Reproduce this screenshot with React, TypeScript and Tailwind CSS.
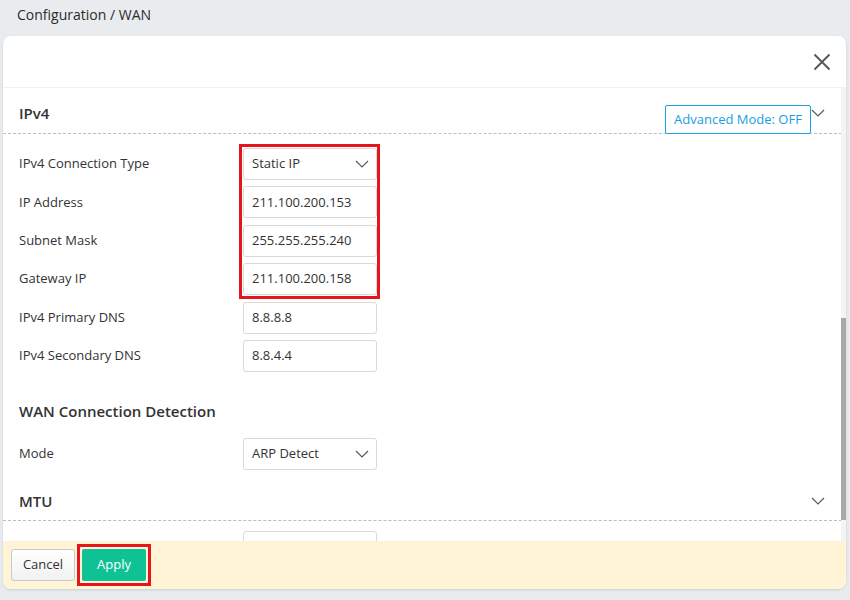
import React from "react";

const font = { fontFamily: '"Open Sans", "Noto Sans", sans-serif' };

const Chevron = ({ className = "" }: { className?: string }) => (
  <svg width="14" height="8" viewBox="0 0 14 8" className={className}>
    <polyline points="1,1 7,7 13,1" fill="none" stroke="#5a5a5a" strokeWidth="1.2" />
  </svg>
);

const Field = ({ value, select }: { value: string; select?: boolean }) => (
  <div className="w-[134px] h-[32px] border border-[#d9d9d9] rounded-[3px] bg-white flex items-center justify-between pl-[8px] pr-[7px] text-[13px] text-[#333]">
    <span>{value}</span>
    {select && <Chevron />}
  </div>
);

const Row = ({ label, value, select }: { label: string; value: string; select?: boolean }) => (
  <div className="flex items-center">
    <div className="w-[224px] text-[13px] text-[#333]">{label}</div>
    <Field value={value} select={select} />
  </div>
);

const App = () => {
  return (
    <div className="w-[850px] h-[600px] bg-[#e8ecef] flex flex-col" style={font}>
      {/* breadcrumb */}
      <div className="h-[36px] pl-[17px] pb-[7px] flex items-center text-[14px] text-[#2b2b2b]">
        Configuration / WAN
      </div>

      <div className="ml-[3px] w-[843px] h-[553px] bg-white rounded-lg shadow-sm flex flex-col overflow-hidden">
        {/* header */}
        <div className="h-[52px] shrink-0 border-b border-[#f1f1f1] flex items-center justify-end pr-[15px]">
          <svg width="18" height="18" viewBox="0 0 18 18">
            <path d="M1.5 1.5 L16.5 16.5 M16.5 1.5 L1.5 16.5" stroke="#555" strokeWidth="1.8" />
          </svg>
        </div>

        {/* body */}
        <div className="flex-1 relative overflow-hidden">
          <div className="w-[839px]">
            {/* IPv4 section header */}
            <div className="h-[46px] pt-[6px] pl-[16px] pr-[17px] flex items-center justify-between border-b border-dashed border-[#bdbdbd]">
              <div className="text-[15px] font-semibold text-[#333]">IPv4</div>
              <div className="flex items-start mt-[12px]">
                <div className="w-[146px] h-[29px] border border-[#1ea0e6] rounded-[2px] flex items-center justify-center text-[13px] text-[#1a9de2] bg-white">
                  Advanced Mode: OFF
                </div>
                <Chevron className="mt-[4px]" />
              </div>
            </div>

            {/* IPv4 form */}
            <div className="relative pl-[16px] pt-[14px] flex flex-col gap-[6.4px]">
              <Row label="IPv4 Connection Type" value="Static IP" select />
              <Row label="IP Address" value="211.100.200.153" />
              <Row label="Subnet Mask" value="255.255.255.240" />
              <Row label="Gateway IP" value="211.100.200.158" />
              <Row label="IPv4 Primary DNS" value="8.8.8.8" />
              <Row label="IPv4 Secondary DNS" value="8.8.4.4" />
              {/* highlight annotation */}
              <div className="absolute left-[236px] top-[10px] w-[141px] h-[155px] border-[3px] border-[#e5151d]" />
            </div>

            {/* WAN connection detection */}
            <div className="pl-[16px] mt-[29px] h-[20px] flex items-center text-[15px] font-semibold text-[#333]">
              WAN Connection Detection
            </div>
            <div className="pl-[16px] mt-[17px]">
              <Row label="Mode" value="ARP Detect" select />
            </div>

            {/* MTU section header */}
            <div className="mt-[4px] h-[47px] pt-[8px] pl-[16px] pr-[17px] flex items-center justify-between border-b border-dashed border-[#bdbdbd]">
              <div className="text-[15px] font-semibold text-[#333]">MTU</div>
              <Chevron />
            </div>
            <div className="pl-[240px] mt-[10px]">
              <Field value="" />
            </div>
          </div>

          {/* scrollbar */}
          <div className="absolute right-0 top-0 bottom-0 w-[5px] bg-[#f3f4f4]">
            <div className="absolute left-0 right-0 top-[230px] h-[202px] bg-[#a9a9a9]" />
          </div>
        </div>

        {/* footer */}
        <div className="h-[48px] shrink-0 bg-[#fff5d6] flex items-center gap-[2px] pl-[8px]">
          <button className="w-[64px] h-[32px] rounded-[3px] border border-[#c9c9c9] bg-gradient-to-b from-white to-[#f1f1f1] text-[13px] text-[#333]">
            Cancel
          </button>
          <div className="p-[2px] border-[3px] border-[#e5151d]">
            <button className="block w-[64px] h-[32px] rounded-[2px] bg-[#0fc295] text-[13px] text-white">
              Apply
            </button>
          </div>
        </div>
      </div>
    </div>
  );
};

export default App;
